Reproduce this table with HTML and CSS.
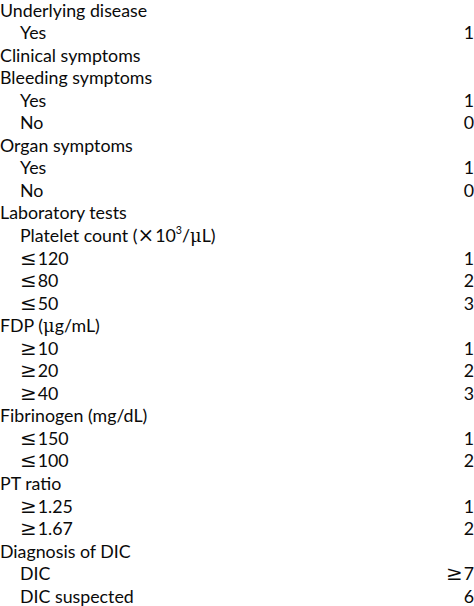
FILE: index.html
```html
<!DOCTYPE html>
<html>
<head>
<meta charset="utf-8">
<link rel="stylesheet" href="styles.css">
</head>
<body>
<div class="table">
  <div class="row"><span class="label">Underlying disease</span><span class="val"></span></div>
  <div class="row sub"><span class="label">Yes</span><span class="val">1</span></div>
  <div class="row"><span class="label">Clinical symptoms</span><span class="val"></span></div>
  <div class="row"><span class="label">Bleeding symptoms</span><span class="val"></span></div>
  <div class="row sub"><span class="label">Yes</span><span class="val">1</span></div>
  <div class="row sub"><span class="label">No</span><span class="val">0</span></div>
  <div class="row"><span class="label">Organ symptoms</span><span class="val"></span></div>
  <div class="row sub"><span class="label">Yes</span><span class="val">1</span></div>
  <div class="row sub"><span class="label">No</span><span class="val">0</span></div>
  <div class="row"><span class="label">Laboratory tests</span><span class="val"></span></div>
  <div class="row sub"><span class="label">Platelet count (<span class="sym">×</span>10<sup>3</sup>/<span class="mu">μ</span>L)</span><span class="val"></span></div>
  <div class="row sub"><span class="label"><span class="sym">≤</span>120</span><span class="val">1</span></div>
  <div class="row sub"><span class="label"><span class="sym">≤</span>80</span><span class="val">2</span></div>
  <div class="row sub"><span class="label"><span class="sym">≤</span>50</span><span class="val">3</span></div>
  <div class="row"><span class="label">FDP (<span class="mu">μ</span>g/mL)</span><span class="val"></span></div>
  <div class="row sub"><span class="label"><span class="sym">≥</span>10</span><span class="val">1</span></div>
  <div class="row sub"><span class="label"><span class="sym">≥</span>20</span><span class="val">2</span></div>
  <div class="row sub"><span class="label"><span class="sym">≥</span>40</span><span class="val">3</span></div>
  <div class="row"><span class="label">Fibrinogen (mg/dL)</span><span class="val"></span></div>
  <div class="row sub"><span class="label"><span class="sym">≤</span>150</span><span class="val">1</span></div>
  <div class="row sub"><span class="label"><span class="sym">≤</span>100</span><span class="val">2</span></div>
  <div class="row"><span class="label">PT ratio</span><span class="val"></span></div>
  <div class="row sub"><span class="label"><span class="sym">≥</span>1.25</span><span class="val">1</span></div>
  <div class="row sub"><span class="label"><span class="sym">≥</span>1.67</span><span class="val">2</span></div>
  <div class="row"><span class="label">Diagnosis of DIC</span><span class="val"></span></div>
  <div class="row sub"><span class="label">DIC</span><span class="val"><span class="sym">≥</span>7</span></div>
  <div class="row sub"><span class="label">DIC suspected</span><span class="val">6</span></div>
</div>
</body>
</html>
```

FILE: styles.css
```css
html, body {
  margin: 0;
  padding: 0;
  background: #ffffff;
  overflow: hidden;
}
body {
  width: 474px;
  height: 606px;
  font-family: "Lato", "Open Sans", sans-serif;
  font-size: 17.8px;
  color: #0a0a0a;
}
.table {
  display: flex;
  flex-direction: column;
  width: 474px;
  margin-top: -1.5px;
}
.row {
  display: flex;
  justify-content: space-between;
  align-items: baseline;
  height: 22.55px;
  line-height: 22.55px;
  white-space: nowrap;
}
.row.sub .label {
  padding-left: 20px;
}
.sym {
  font-family: "DejaVu Serif", serif;
  font-size: 1.12em;
  margin-right: 1px;
}
.mu {
  font-family: "DejaVu Serif", serif;
  font-size: 1em;
}
sup {
  font-size: 0.6em;
  line-height: 0;
  vertical-align: 0.75em;
}
.val {
  text-align: right;
}
```
